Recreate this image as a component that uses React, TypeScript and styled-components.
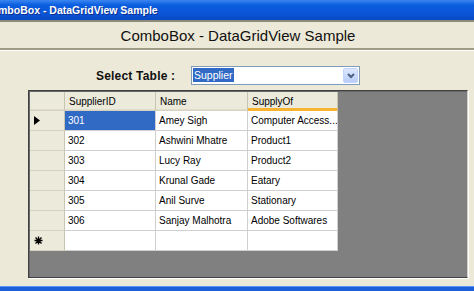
import React from 'react';
import styled, { createGlobalStyle } from 'styled-components';

const GlobalStyle = createGlobalStyle`
  html, body {
    margin: 0;
    padding: 0;
    width: 474px;
    height: 291px;
    overflow: hidden;
    background: #ece9d8;
  }
`;

const Window = styled.div`
  width: 474px;
  height: 291px;
  display: flex;
  flex-direction: column;
  background: #ece9d8;
  font-family: 'Liberation Sans', Arial, sans-serif;
  overflow: hidden;
`;

const TitleBar = styled.div`
  height: 20px;
  flex: none;
  display: flex;
  align-items: center;
  background: linear-gradient(to bottom, #3a86f0 0%, #0b5ee0 25%, #0a54d6 70%, #0848c4 100%);
  color: #fff;
  font-weight: bold;
  font-size: 10.5px;
  white-space: nowrap;
  overflow: hidden;
`;

// the window is cropped on the left, so the caption starts mid-word
const TitleText = styled.span`
  margin-left: -16px;
  text-shadow: 1px 1px 0 #0a3090;
`;

const HeaderPanel = styled.div`
  height: 26px;
  flex: none;
  display: flex;
  align-items: center;
  justify-content: center;
  border-top: 2px solid #8c8a78;
  border-bottom: 2px solid #9d9a86;
  box-shadow: 0 1px 0 #fff;
  font-size: 15px;
  color: #111;
  padding-left: 2px;
`;

const SelectRow = styled.div`
  height: 19px;
  flex: none;
  display: flex;
  align-items: center;
  margin-top: 16px;
  padding-left: 96px;
  gap: 16px;
`;

const Label = styled.span`
  font-weight: bold;
  font-size: 12px;
  color: #111;
  width: 79px;
  white-space: nowrap;
  letter-spacing: 0.2px;
`;

const Combo = styled.div`
  width: 166px;
  height: 17px;
  display: flex;
  align-items: center;
  background: #fff;
  border: 1px solid #7f9db9;
  padding-left: 1px;
`;

const ComboText = styled.span`
  flex: 1;
  font-size: 10.5px;
  line-height: 11px;
`;

const Highlight = styled.span`
  background: #316ac5;
  color: #fff;
  padding: 1px 1px;
`;

const DropButton = styled.div`
  width: 15px;
  height: 15px;
  margin-right: 1px;
  display: flex;
  align-items: center;
  justify-content: center;
  background: linear-gradient(to bottom, #dde8fd, #b9cdf7);
  border: 1px solid #c3d3fd;
  border-radius: 2px;
  box-sizing: border-box;
`;

const GridFrame = styled.div`
  margin: 5px 0 0 28px;
  width: 440px;
  height: 188px;
  box-sizing: border-box;
  background: #808080;
  border-top: 1px solid #404040;
  border-left: 1px solid #404040;
  border-right: 1px solid #d4d0c8;
  border-bottom: 1px solid #404040;
  box-shadow: inset 1px 1px 0 #6a6a6a, 1px 1px 0 #fff;
  overflow: hidden;
  padding: 1px 0 0 1px;
`;

const Table = styled.div`
  display: grid;
  grid-template-columns: 35px 91px 92px 90px;
  grid-auto-rows: 20px;
  grid-template-rows: 19px;
  width: 308px;
  background: #fff;
  font-size: 10px;
  color: #000;
`;

const HeadCell = styled.div<{ $hot?: boolean }>`
  background: #ebeadb;
  border-right: 1px solid #c7c5b2;
  border-bottom: 1px solid ${(p) => (p.$hot ? '#f8b330' : '#d6d2c2')};
  box-shadow: ${(p) => (p.$hot ? 'inset 0 -2px 0 #f8b330' : 'inset 0 -1px 0 #e2decd')};
  display: flex;
  align-items: center;
  padding-left: 4px;
  white-space: nowrap;
  overflow: hidden;
`;

const RowHead = styled.div`
  background: #ebeadb;
  border-right: 1px solid #c7c5b2;
  border-bottom: 1px solid #d6d2c2;
  display: flex;
  align-items: center;
  padding-left: 4px;
`;

const Cell = styled.div<{ $selected?: boolean }>`
  background: ${(p) => (p.$selected ? '#316ac5' : '#fff')};
  color: ${(p) => (p.$selected ? '#fff' : '#000')};
  border-right: 1px solid #cfcfcf;
  border-bottom: 1px solid #cfcfcf;
  display: flex;
  align-items: center;
  padding-left: 3px;
  white-space: nowrap;
  overflow: hidden;
`;

const BottomBar = styled.div`
  margin-top: auto;
  height: 4px;
  flex: none;
  background: #1d5fd8;
  border-top: 1px solid #5a93f0;
`;

const rows = [
  ['301', 'Amey Sigh', 'Computer Access...'],
  ['302', 'Ashwini Mhatre', 'Product1'],
  ['303', 'Lucy Ray', 'Product2'],
  ['304', 'Krunal Gade', 'Eatary'],
  ['305', 'Anil Surve', 'Stationary'],
  ['306', 'Sanjay Malhotra', 'Adobe Softwares'],
];

const Arrow = () => (
  <svg width="6" height="9" viewBox="0 0 6 9">
    <path d="M0 0 L6 4.5 L0 9 Z" fill="#000" />
  </svg>
);

const Star = () => (
  <svg width="9" height="9" viewBox="0 0 9 9">
    <path d="M4.5 0.5 V8.5 M0.5 4.5 H8.5 M1.5 1.5 L7.5 7.5 M7.5 1.5 L1.5 7.5" stroke="#000" strokeWidth="1.3" />
  </svg>
);

export default function App() {
  return (
    <>
      <GlobalStyle />
      <Window>
        <TitleBar>
          <TitleText>ComboBox - DataGridView Sample</TitleText>
        </TitleBar>
        <HeaderPanel>ComboBox - DataGridView Sample</HeaderPanel>
        <SelectRow>
          <Label>Select Table :</Label>
          <Combo>
            <ComboText>
              <Highlight>Supplier</Highlight>
            </ComboText>
            <DropButton>
              <svg width="8" height="6" viewBox="0 0 8 6">
                <path d="M1 1 L4 4 L7 1" stroke="#4d6185" strokeWidth="2" fill="none" />
              </svg>
            </DropButton>
          </Combo>
        </SelectRow>
        <GridFrame>
          <Table>
            <HeadCell />
            <HeadCell>SupplierID</HeadCell>
            <HeadCell>Name</HeadCell>
            <HeadCell $hot>SupplyOf</HeadCell>
            {rows.map((r, i) => (
              <React.Fragment key={r[0]}>
                <RowHead>{i === 0 && <Arrow />}</RowHead>
                <Cell $selected={i === 0}>{r[0]}</Cell>
                <Cell>{r[1]}</Cell>
                <Cell>{r[2]}</Cell>
              </React.Fragment>
            ))}
            <RowHead>
              <Star />
            </RowHead>
            <Cell />
            <Cell />
            <Cell />
          </Table>
        </GridFrame>
        <BottomBar />
      </Window>
    </>
  );
}
